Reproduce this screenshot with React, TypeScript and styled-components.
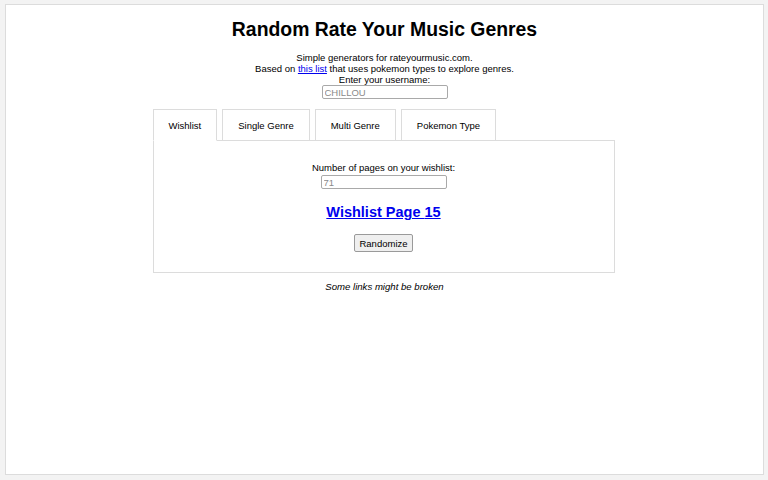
import { useState } from 'react'
import styled, { createGlobalStyle } from 'styled-components'

const GlobalStyle = createGlobalStyle`
  html, body {
    margin: 0;
    padding: 0;
    background: #f3f3f3;
  }

  body {
    font-family: "Liberation Sans", Arial, sans-serif;
    color: #000;
  }
`

const Page = styled.div`
  padding: 4px 4px 5px 5px;
`

const Sheet = styled.main`
  box-sizing: border-box;
  height: 471px;
  background: #fff;
  border: 1px solid #dcdcdc;
  display: flex;
  flex-direction: column;
  align-items: center;
`

const Title = styled.h1`
  margin: 13px 0 0;
  font-size: 19.4px;
  line-height: 22px;
  font-weight: bold;
`

const Intro = styled.p`
  margin: 12px 0 0;
  font-size: 9.5px;
  line-height: 11px;
  text-align: center;

  a {
    color: #0000ee;
  }
`

const TextInput = styled.input`
  box-sizing: border-box;
  width: 126px;
  height: 14px;
  margin: 0;
  padding: 0 2px;
  border: 1px solid #a9a9a9;
  border-radius: 2px;
  font-family: inherit;
  font-size: 9.5px;
  color: #000;

  &::placeholder {
    color: #8a8a8a;
  }
`

const Tabs = styled.section`
  margin-top: 10px;
  width: 462px;
  transform: translateX(-1px);
`

const TabBar = styled.div`
  display: flex;
  gap: 5px;
`

const Tab = styled.button<{ $active: boolean }>`
  box-sizing: border-box;
  height: 32px;
  padding: 0 15px;
  margin: 0 0 -1px;
  background: #fff;
  border: 1px solid #dcdcdc;
  border-bottom-color: ${(p) => (p.$active ? '#fff' : '#dcdcdc')};
  position: relative;
  z-index: 1;
  font-family: inherit;
  font-size: 9.5px;
  color: #000;
  cursor: pointer;
`

const Panel = styled.div`
  box-sizing: border-box;
  height: 133px;
  border: 1px solid #dcdcdc;
  padding-top: 21px;
  display: flex;
  flex-direction: column;
  align-items: center;
`

const Label = styled.label`
  font-size: 9.5px;
  line-height: 11px;
  margin-bottom: 2px;
`

const ResultLink = styled.a`
  margin-top: 15px;
  font-size: 14.5px;
  line-height: 17px;
  font-weight: bold;
  color: #0000ee;
`

const Button = styled.button`
  margin-top: 13px;
  height: 18px;
  padding: 0 4px;
  background: #efefef;
  border: 1px solid #9a9a9a;
  border-radius: 2px;
  font-family: inherit;
  font-size: 9.5px;
  color: #000;
`

const Note = styled.p`
  margin: 8px 0 0;
  font-size: 9.6px;
  line-height: 11px;
  font-style: italic;
`

const TABS = ['Wishlist', 'Single Genre', 'Multi Genre', 'Pokemon Type']

export default function App() {
  const [tab, setTab] = useState('Wishlist')
  const [page, setPage] = useState(15)

  return (
    <Page>
      <GlobalStyle />
      <Sheet>
        <Title>Random Rate Your Music Genres</Title>
        <Intro>
          Simple generators for rateyourmusic.com.
          <br />
          Based on <a href="#">this list</a> that uses pokemon types to explore genres.
          <br />
          Enter your username:
        </Intro>
        <TextInput placeholder="CHILLOU" />

        <Tabs>
          <TabBar>
            {TABS.map((t) => (
              <Tab key={t} $active={tab === t} onClick={() => setTab(t)}>
                {t}
              </Tab>
            ))}
          </TabBar>
          <Panel>
            <Label>Number of pages on your wishlist:</Label>
            <TextInput placeholder="71" />
            <ResultLink href="#">Wishlist Page {page}</ResultLink>
            <Button onClick={() => setPage(1 + Math.floor(Math.random() * 71))}>
              Randomize
            </Button>
          </Panel>
        </Tabs>

        <Note>Some links might be broken</Note>
      </Sheet>
    </Page>
  )
}
